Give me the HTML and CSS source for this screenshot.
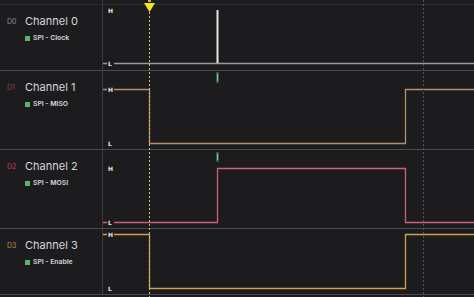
FILE: index.html
```html
<!DOCTYPE html>
<html lang="en">

<head>
    <meta charset="UTF-8">
    <meta name="viewport" content="width=device-width, initial-scale=1.0">
    <title>Logic Analyzer</title>
    <link rel="stylesheet" href="styles.css">
</head>

<body>
    <div class="analyzer">
        <!-- top ruler strip -->
        <div class="ruler">
            <div class="ruler_left"></div>
            <div class="ruler_right"></div>
        </div>

        <!-- channel 0 -->
        <div class="row row_short">
            <div class="label">
                <div class="dnum d0">D0</div>
                <div class="info">
                    <div class="name">Channel 0</div>
                    <div class="proto"><i></i>SPI - Clock</div>
                </div>
            </div>
            <div class="plot">
                <svg width="371" height="65">
                    <line x1="0" y1="58.5" x2="371" y2="58.5" stroke="#9a9a9c" stroke-width="1.5" />
                    <line x1="114.5" y1="5" x2="114.5" y2="58" stroke="#e4e4e4" stroke-width="2" />
                    <rect x="4" y="1" width="7" height="8" fill="#1c1c1f" />
                    <text x="5" y="7.5" class="lvl">H</text>
                    <rect x="4" y="54" width="7" height="8" fill="#1c1c1f" />
                    <text x="5" y="61" class="lvl">L</text>
                </svg>
            </div>
        </div>

        <!-- channel 1 -->
        <div class="row">
            <div class="label">
                <div class="dnum d1">D1</div>
                <div class="info">
                    <div class="name">Channel 1</div>
                    <div class="proto"><i></i>SPI - MISO</div>
                </div>
            </div>
            <div class="plot">
                <svg width="371" height="78">
                    <polyline points="0,18.5 46.5,18.5 46.5,72.5 302.5,72.5 302.5,18.5 371,18.5" fill="none" stroke="#b88d6c" stroke-width="1.3" />
                    <rect x="113" y="1" width="3" height="11" fill="#2c5e44" />
                    <rect x="114" y="3" width="1" height="7" fill="#8cc4a0" />
                    <rect x="4" y="14" width="7" height="8" fill="#1c1c1f" />
                    <text x="5" y="21" class="lvl">H</text>
                    <text x="5" y="75" class="lvl">L</text>
                </svg>
            </div>
        </div>

        <!-- channel 2 -->
        <div class="row">
            <div class="label">
                <div class="dnum d2">D2</div>
                <div class="info">
                    <div class="name">Channel 2</div>
                    <div class="proto"><i></i>SPI - MOSI</div>
                </div>
            </div>
            <div class="plot">
                <svg width="371" height="78">
                    <polyline points="0,72.5 114.5,72.5 114.5,18.5 302.5,18.5 302.5,72.5 371,72.5" fill="none" stroke="#d0607a" stroke-width="1.3" />
                    <rect x="113" y="2" width="3" height="10" fill="#2c5e44" />
                    <rect x="114" y="4" width="1" height="6" fill="#8cc4a0" />
                    <text x="5" y="21" class="lvl">H</text>
                    <rect x="4" y="68" width="7" height="8" fill="#1c1c1f" />
                    <text x="5" y="75" class="lvl">L</text>
                </svg>
            </div>
        </div>

        <!-- channel 3 -->
        <div class="row row_short">
            <div class="label">
                <div class="dnum d3">D3</div>
                <div class="info">
                    <div class="name">Channel 3</div>
                    <div class="proto"><i></i>SPI - Enable</div>
                </div>
            </div>
            <div class="plot">
                <svg width="371" height="65">
                    <polyline points="0,5.5 46.5,5.5 46.5,59.5 302.5,59.5 302.5,5.5 371,5.5" fill="none" stroke="#d0a050" stroke-width="1.3" />
                    <rect x="4" y="1" width="7" height="8" fill="#1c1c1f" />
                    <text x="5" y="8" class="lvl">H</text>
                    <text x="5" y="62" class="lvl">L</text>
                </svg>
            </div>
        </div>

        <!-- cursors over all rows -->
        <svg class="cursors" width="474" height="297">
            <line x1="149.5" y1="0" x2="149.5" y2="297" stroke="#d4c070" stroke-width="1" stroke-dasharray="2,2" />
            <line x1="423.5" y1="0" x2="423.5" y2="297" stroke="#55555a" stroke-width="1" stroke-dasharray="2,2" />
            <rect x="148" y="0" width="3" height="2" fill="#c9b45c" />
            <polygon points="144,3 155,3 149.5,12" fill="#f2e420" />
        </svg>
    </div>
</body>

</html>
```

FILE: styles.css
```css
* {
    margin: 0;
    padding: 0;
}
body {
    background-color: #1c1c1f;
    font-family: Inter, "Noto Sans", sans-serif;
    overflow: hidden;
}
.analyzer {
    position: relative;
    width: 474px;
    height: 297px;
}
.ruler {
    display: flex;
    height: 4px;
    border-bottom: 1px solid #2e2e32;
}
.ruler_left {
    width: 102px;
    border-right: 1px solid #3a3a3e;
}
.ruler_right {
    flex: 1;
}
.row {
    display: flex;
    height: 78px;
    border-bottom: 1px solid #4a4a4e;
}
.row_short {
    height: 65px;
}
.label {
    display: flex;
    width: 102px;
    border-right: 1px solid #3a3a3e;
    padding-top: 10px;
}
.dnum {
    width: 18px;
    padding-left: 7px;
    font-size: 7px;
    line-height: 12px;
    padding-top: 1px;
}
.d0 {
    color: #8c8c90;
}
.d1 {
    color: #8a4a3c;
}
.d2 {
    color: #c23c50;
}
.d3 {
    color: #c88c3c;
}
.name {
    font-size: 11px;
    line-height: 12px;
    color: #d6d6d8;
}
.proto {
    display: flex;
    align-items: center;
    margin-top: 7px;
    font-size: 6.8px;
    line-height: 8px;
    font-weight: 700;
    color: #c8c8cc;
}
.proto i {
    width: 5px;
    height: 5px;
    margin-right: 3px;
    background-color: #5cb85c;
}
.plot {
    flex: 1;
    overflow: hidden;
}
.plot svg {
    display: block;
}
.lvl {
    font-family: "DejaVu Sans", sans-serif;
    font-size: 6px;
    font-weight: 700;
    fill: #e6e6e6;
}
.cursors {
    position: absolute;
    left: 0;
    top: 0;
    pointer-events: none;
}
```
